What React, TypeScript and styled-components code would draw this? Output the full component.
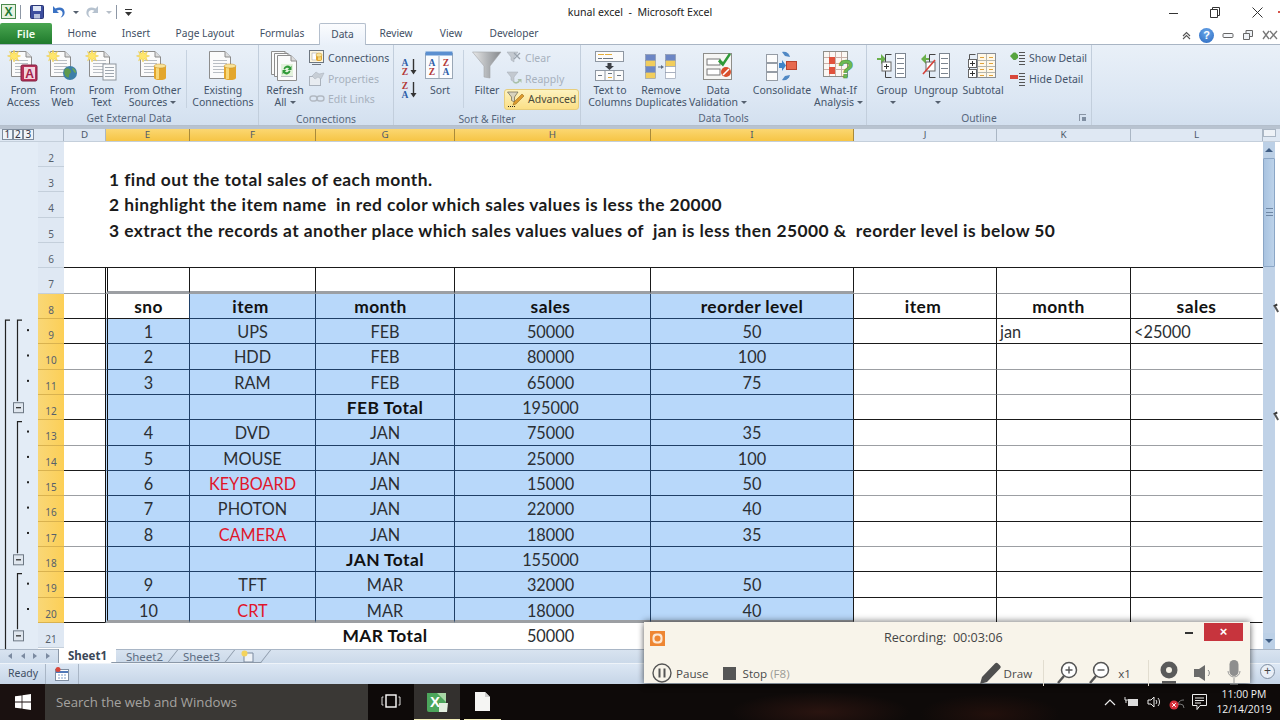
import React from "react";
import styled, { createGlobalStyle } from "styled-components";

const GlobalStyle = createGlobalStyle`
  html, body { margin: 0; padding: 0; width: 1280px; height: 720px; overflow: hidden; background: #fff; }
  * { box-sizing: border-box; }
`;

const uiFont = `"Noto Sans", "Open Sans", "Liberation Sans", sans-serif`;
const cellFont = `Lato, "Open Sans", "Liberation Sans", sans-serif`;
const COLS = "26px 42px 84px 126px 139px 196px 203px 143px 134px 132px";

/* ---------- small drawing helpers ---------- */
const Sheet = ({ x = 0, y = 0, w = 20, h = 26 }: { x?: number; y?: number; w?: number; h?: number }) => (
  <g>
    <path d={`M${x + 0.5} ${y + 0.5}H${x + w - 6}L${x + w - 0.5} ${y + 6}V${y + h - 0.5}H${x + 0.5}Z`} fill="#fbfbfb" stroke="#8d8d8d" />
    <path d={`M${x + w - 6} ${y + 0.5}V${y + 6}H${x + w - 0.5}`} fill="#dcdcdc" stroke="#8d8d8d" />
    {[9, 12, 15, 18, 21].map((d) => (
      <path key={d} d={`M${x + 4} ${y + d + 0.5}H${x + w - 4}`} stroke="#b9bec4" />
    ))}
  </g>
);
const Burst = () => (
  <g>
    <path d="M6 0l1.3 3.6L10.5 1.5 9 5l3.5.9L9 7.3l1.5 3.4-3.2-2L6 12 4.8 8.7l-3.2 2L3 7.3-.5 5.9 3 5 1.5 1.5l3.2 2.1z" fill="#ffe66b" stroke="#e8c43a" strokeWidth=".5" />
  </g>
);
const Barrel = ({ x, y, w = 12, h = 15 }: { x: number; y: number; w?: number; h?: number }) => (
  <g>
    <path d={`M${x} ${y + 2}V${y + h - 2}a${w / 2} 2 0 0 0 ${w} 0V${y + 2}Z`} fill="#e3a62d" />
    <path d={`M${x + 2} ${y + 3}V${y + h - 1}h3V${y + 3}Z`} fill="#f7d777" />
    <ellipse cx={x + w / 2} cy={y + 2} rx={w / 2} ry="2" fill="#f8e39a" stroke="#c48d1f" strokeWidth=".5" />
  </g>
);

const Svg = styled.svg`
  display: block;
  flex: none;
  overflow: visible;
`;

const Icon = ({ w = 32, h = 32, children }: { w?: number; h?: number; children: React.ReactNode }) => (
  <Svg width={w} height={h} viewBox={`0 0 ${w} ${h}`}>
    {children}
  </Svg>
);

const FromAccessIcon = () => (
  <Icon>
    <Sheet x={3} y={1} w={21} h={26} />
    <Burst />
    <rect x="13" y="15" width="16" height="16" rx="1.5" fill="#b8325a" stroke="#7e1f3e" />
    <rect x="16" y="17" width="11" height="12" fill="#f3d4de" />
    <text x="21.5" y="27.5" fontFamily="Liberation Sans" fontWeight="700" fontSize="12" textAnchor="middle" fill="#a51d4a">A</text>
  </Icon>
);
const FromWebIcon = () => (
  <Icon>
    <Sheet x={3} y={1} w={21} h={26} />
    <Burst />
    <circle cx="23" cy="23" r="7" fill="#3d7fa8" />
    <path d="M18 19c3-2 5 0 6 2s-2 2-2 5-3 1-4-1-1-4 0-6z" fill="#5f9a4d" />
    <path d="M25 18c2 0 4 2 4 5-2 0-3-3-4-5z" fill="#6da856" />
  </Icon>
);
const FromTextIcon = () => (
  <Icon>
    <Sheet x={3} y={1} w={21} h={26} />
    <Burst />
    <rect x="17" y="14" width="13" height="16" fill="#fafbfc" stroke="#8d959d" />
    {[17, 20, 23, 26].map((d) => (
      <path key={d} d={`M19 ${d + 0.5}H28`} stroke="#9fa7af" />
    ))}
  </Icon>
);
const FromOtherIcon = () => (
  <Icon>
    <Sheet x={3} y={1} w={21} h={26} />
    <Burst />
    <Barrel x={17} y={14} w={12} h={16} />
  </Icon>
);
const ExistingIcon = () => (
  <Icon>
    <Sheet x={2} y={1} w={22} h={28} />
    <Barrel x={17} y={14} w={12} h={16} />
  </Icon>
);
const RefreshIcon = () => (
  <Icon>
    <Sheet x={2} y={1} w={20} h={24} />
    <Sheet x={5} y={3} w={20} h={24} />
    <Sheet x={8} y={5} w={20} h={26} />
    <rect x="12" y="14" width="12" height="12" fill="#e3f2dc" />
    <path d="M14.5 19a4 4 0 0 1 7-2l1-1.5V20h-4l1.5-1.5a2.4 2.4 0 0 0-4 1z" fill="#2f9a38" />
    <path d="M21.5 21a4 4 0 0 1-7 2l-1 1.5V20h4L16 21.5a2.4 2.4 0 0 0 4-1z" fill="#2f9a38" />
  </Icon>
);
const SortAscIcon = ({ flip }: { flip?: boolean }) => (
  <Icon w={18} h={20}>
    <text x="5" y="9" fontFamily="Liberation Serif" fontWeight="700" fontSize="9.5" textAnchor="middle" fill={flip ? "#b23838" : "#2d5ea8"}>{flip ? "Z" : "A"}</text>
    <text x="5" y="18" fontFamily="Liberation Serif" fontWeight="700" fontSize="9.5" textAnchor="middle" fill={flip ? "#2d5ea8" : "#b23838"}>{flip ? "A" : "Z"}</text>
    <path d="M13.5 2v13" stroke="#333" strokeWidth="1.4" />
    <path d="M10.5 13h6l-3 4.5z" fill="#333" />
  </Icon>
);
const SortIcon = () => (
  <Icon w={30} h={30}>
    <rect x=".5" y="2.5" width="27" height="25" fill="#fbfcfe" stroke="#9aa7b6" />
    <rect x=".5" y=".5" width="27" height="4" fill="#5b8fd0" />
    <path d="M14 5v22" stroke="#9aa7b6" />
    <text x="7" y="15" fontFamily="Liberation Serif" fontWeight="700" fontSize="9.5" textAnchor="middle" fill="#2d5ea8">A</text>
    <text x="7" y="24" fontFamily="Liberation Serif" fontWeight="700" fontSize="9.5" textAnchor="middle" fill="#b23838">Z</text>
    <text x="21" y="15" fontFamily="Liberation Serif" fontWeight="700" fontSize="9.5" textAnchor="middle" fill="#b23838">Z</text>
    <text x="21" y="24" fontFamily="Liberation Serif" fontWeight="700" fontSize="9.5" textAnchor="middle" fill="#2d5ea8">A</text>
  </Icon>
);
const FilterIcon = () => (
  <Icon w={30} h={30}>
    <defs>
      <linearGradient id="fn" x1="0" x2="1" y1="0" y2="0">
        <stop offset="0" stopColor="#e8e8e8" />
        <stop offset=".5" stopColor="#b4b7ba" />
        <stop offset="1" stopColor="#85888c" />
      </linearGradient>
    </defs>
    <path d="M.5 1H29L18 15V27l-6-1V15z" fill="url(#fn)" stroke="#a2a5a8" strokeWidth=".6" />
  </Icon>
);
const TextColumnsIcon = () => (
  <Icon w={30} h={30}>
    <rect x=".5" y=".5" width="28" height="10" fill="#fbfbfb" stroke="#8e97a2" />
    <path d="M3 3.5h6M10 3.5h7" stroke="#e3ad3b" /><path d="M3 7.5h4M8 7.5h10" stroke="#6b7683" />
    <path d="M12.5 12h4v3h2.5l-4.5 4-4.5-4h2.5z" fill="#3b3f45" />
    <rect x=".5" y="19.5" width="28" height="10" fill="#fbfbfb" stroke="#8e97a2" />
    <path d="M10 19.5v10M19 19.5v10" stroke="#8e97a2" />
    <path d="M3 24.5h4M13 22.5h4M22 24.5h4" stroke="#6b7683" /><path d="M13 26.5h4" stroke="#e3ad3b" />
  </Icon>
);
const RemoveDupIcon = () => (
  <Icon w={32} h={30}>
    {[0, 1, 2, 3].map((i) => (
      <rect key={i} x=".5" y={3.5 + i * 6} width="10" height="6" fill={i % 2 ? "#f1cd5c" : "#6c86c4"} stroke="#8b95a8" strokeWidth=".6" />
    ))}
    <path d="M13 16h4" stroke="#5b6a80" /><path d="M16 14l3 2-3 2z" fill="#5b6a80" />
    {[0, 1, 2, 3].map((i) => (
      <rect key={i} x="20.5" y={3.5 + i * 6} width="10" height="6" fill={i === 0 ? "#6c86c4" : i === 1 ? "#f1cd5c" : "#fff"} stroke="#8b95a8" strokeWidth=".6" />
    ))}
  </Icon>
);
const ValidationIcon = () => (
  <Icon w={30} h={30}>
    <rect x=".5" y="2.5" width="28" height="26" fill="#f6f6f4" stroke="#8e8e8a" />
    <rect x="4" y="8" width="13" height="6" fill="#fff" stroke="#777" />
    <rect x="4" y="18" width="13" height="6" fill="#fff" stroke="#777" />
    <path d="M17 8l3 3 6-9 2 1.5-8 12-5-5z" fill="#2f9a38" />
    <circle cx="23" cy="21" r="5" fill="#d94f2b" />
    <path d="M20 24l6-6" stroke="#fff" strokeWidth="1.6" />
  </Icon>
);
const ConsolidateIcon = () => (
  <Icon w={32} h={30}>
    {[3, 12, 21].map((y) => (
      <rect key={y} x=".5" y={y + 0.5} width="11" height="8" fill="#fcfcfc" stroke="#959ca5" />
    ))}
    <path d="M13 12h3v-3l4 5.5-4 5.5v-3h-3z" fill="#3f84c9" />
    <rect x="20.5" y="10.5" width="10" height="8" fill="#e76a4f" stroke="#b9442f" />
    <path d="M16 1c4-1 7 1 8 5l-5-1z" fill="#5088c4" />
    <path d="M16 29c4 1 7-1 8-5l-5 1z" fill="#5088c4" />
  </Icon>
);
const WhatIfIcon = () => (
  <Icon w={32} h={30}>
    <rect x=".5" y=".5" width="24" height="25" fill="#fbf7f3" stroke="#8e8e8a" />
    {[6, 12, 18].map((p) => (
      <path key={p} d={`M${p + 0.5} 1V25M1 ${p + 0.5}H24`} stroke="#c9b0a8" />
    ))}
    <rect x="6" y="6" width="6" height="7" fill="#e1523c" /><rect x="6" y="16" width="6" height="7" fill="#e1523c" />
    <text x="23" y="27" fontFamily="Liberation Sans" fontWeight="700" fontSize="26" textAnchor="middle" fill="#6dbb52" stroke="#3f8a37" strokeWidth=".5">?</text>
  </Icon>
);
const Arrow = ({ color, dir }: { color: string; dir: number }) => (
  <path d={dir > 0 ? "M0 4h4V0l5 5-5 5V6H0z" : "M9 4H5V0L0 5l5 5V6h4z"} fill={color} />
);
const Brackets = ({ x = 7 }: { x?: number }) => (
  <g transform={`translate(${x} 0)`}>
    <path d="M7.5 2.5H1.5V25.5H7.5" fill="none" stroke="#444" />
    <rect x="11.5" y="1.5" width="10" height="24" fill="#fff" stroke="#7c8590" />
    {[6, 11, 16, 21].map((d) => (
      <path key={d} d={`M13 ${d + 0.5}H20`} stroke="#7c8590" />
    ))}
  </g>
);
const GroupIcon = () => (
  <Icon w={30} h={28}>
    <g transform="translate(0 2)"><Arrow color="#6bb04c" dir={1} /></g>
    <Brackets />
    <rect x="5" y="10" width="9" height="9" fill="#fff" stroke="#666" />
    <path d="M9.5 12v5M7 14.5h5" stroke="#333" />
  </Icon>
);
const UngroupIcon = () => (
  <Icon w={30} h={28}>
    <g transform="translate(0 2)"><Arrow color="#6bb04c" dir={-1} /></g>
    <Brackets />
    <rect x="5" y="10" width="9" height="9" fill="#fff" stroke="#666" />
    <path d="M2 22L14 8" stroke="#d6423a" strokeWidth="1.6" />
  </Icon>
);
const SubtotalIcon = () => (
  <Icon w={30} h={28}>
    <path d="M7.5 2.5H1.5V25.5H7.5" fill="none" stroke="#555" />
    <rect x="9.5" y="1.5" width="18" height="24" fill="#fff8e8" stroke="#8a8f96" />
    <path d="M18.5 2v23M10 8.5h17M10 14.5h17M10 20.5h17" stroke="#b6b6ae" />
    <path d="M12 5.5h4M21 5.5h4M12 11.5h4M21 11.5h4M12 17.5h4M21 17.5h4M12 23.5h4M21 23.5h4" stroke="#e0a33b" />
    <rect x=".5" y="7.5" width="8" height="8" fill="#fff" stroke="#666" /><path d="M4.5 9v5M2 11.5h5" stroke="#333" />
    <rect x=".5" y="17.5" width="8" height="8" fill="#fff" stroke="#666" /><path d="M4.5 19v5M2 21.5h5" stroke="#333" />
  </Icon>
);
const ConnIcon = () => (
  <Icon w={16} h={16}>
    <rect x=".5" y=".5" width="14" height="12" fill="#fdf6e0" stroke="#6d7680" />
    <rect x="3" y="3" width="5" height="7" fill="#fff" stroke="#999" strokeWidth=".5" />
    <Barrel x={7} y={3} w={6} h={8} />
    <path d="M3 14.5h9" stroke="#6d7680" />
  </Icon>
);
const PropsIcon = () => (
  <Icon w={16} h={16}>
    <rect x=".5" y="5.5" width="11" height="9" fill="#e8ecf1" stroke="#aab2bc" />
    <path d="M3 5l4-4 3 2 5-1-3 6-3-2-3 2z" fill="#c7ced6" stroke="#a7afb8" strokeWidth=".5" />
  </Icon>
);
const LinksIcon = () => (
  <Icon w={16} h={16}>
    <rect x="1" y="5" width="7" height="5" rx="2.5" fill="none" stroke="#b2b9c2" strokeWidth="1.4" />
    <rect x="8" y="5" width="7" height="5" rx="2.5" fill="none" stroke="#b2b9c2" strokeWidth="1.4" />
  </Icon>
);
const ClearIcon = () => (
  <Icon w={16} h={16}>
    <path d="M1 2h11L8 7v5L5 10V7z" fill="#c3c9d0" stroke="#a5adb6" strokeWidth=".5" />
    <path d="M8 9l6-6M8 3l6 6" stroke="#9aa3ad" strokeWidth="1.3" />
  </Icon>
);
const ReapplyIcon = () => (
  <Icon w={16} h={16}>
    <path d="M1 1h11L8 6v5L5 9V6z" fill="#c3c9d0" stroke="#a5adb6" strokeWidth=".5" />
    <path d="M7 11a4 4 0 0 0 7-1l1.5 2V8h-4l1 1.2a3 3 0 0 1-5 .8z" fill="#a9c0a9" />
  </Icon>
);
const AdvancedIcon = () => (
  <Icon w={18} h={17}>
    <path d="M.5 1H11L7.5 6V11L4.5 9.5V6z" fill="#d8d3bd" stroke="#6a6653" strokeWidth=".7" />
    <path d="M7 11L15 3l2 2-8 8-3 1z" fill="#dd9a2d" stroke="#8a6012" strokeWidth=".5" />
    <path d="M1 15.5h7" stroke="#222" strokeDasharray="1 1" />
  </Icon>
);
const DetailIcon = ({ show }: { show?: boolean }) => (
  <Icon w={16} h={14}>
    {show ? (
      <path d="M0 5l3.5-3.5h2L8 4v3L5.5 9h-2z" fill="#58a540" />
    ) : (
      <rect x="0" y="3" width="8" height="4" fill="#d8473b" />
    )}
    {[1, 4, 7, 10, 13].map((y) => (
      <path key={y} d={`M9 ${y + 0.5}H15`} stroke="#555" />
    ))}
  </Icon>
);

/* ---------- title bar ---------- */
const TitleBar = styled.div`
  height: 24px;
  display: flex;
  align-items: center;
  background: #fff;
  position: relative;
`;
const Qat = styled.div`
  display: flex;
  align-items: center;
  padding-left: 1px;
`;
const QatSep = styled.span<{ $gap: number }>`
  width: 1px;
  height: 14px;
  background: #8d97a5;
  margin: 0 ${(p) => p.$gap}px;
`;
const QatGap = styled.span<{ $w: number }>`
  width: ${(p) => p.$w}px;
  flex: none;
`;
const TitleText = styled.div`
  position: absolute;
  left: 0;
  right: 0;
  top: 5px;
  text-align: center;
  font: 10.6px ${uiFont};
  color: #222;
  white-space: pre;
`;
const WinControls = styled.div`
  margin-left: auto;
  display: flex;
  align-items: center;
`;
const WinBtn = styled.div`
  width: 42px;
  height: 24px;
  display: flex;
  align-items: center;
  justify-content: center;
`;
const RedNick = styled.span`
  width: 2px;
  height: 2px;
  background: #d6554b;
`;

/* ---------- tab strip ---------- */
const TabStrip = styled.div`
  height: 21px;
  display: flex;
  align-items: flex-end;
  background: #fff;
  position: relative;
  border-bottom: 1px solid #a9b5c4;
`;
const FileTab = styled.div`
  width: 52px;
  height: 21px;
  background: linear-gradient(#4aa651, #1f7a2c);
  border-radius: 2px 2px 0 0;
  color: #f2fff2;
  font: 600 11px/21px ${uiFont};
  text-align: center;
`;
const Tab = styled.div<{ $w: number; $active?: boolean }>`
  width: ${(p) => p.$w}px;
  height: ${(p) => (p.$active ? "22px" : "21px")};
  font: 10.2px/21px ${uiFont};
  color: #3f4f64;
  text-align: center;
  ${(p) =>
    p.$active
      ? `background: linear-gradient(#fbfcfe, #e9f0f9); border: 1px solid #b4bfcd; border-bottom: none; border-radius: 2px 2px 0 0; margin: 0 0 -1px 5px; position: relative; z-index: 1;`
      : ""}
`;
const HelpRow = styled.div`
  position: absolute;
  right: 0;
  top: 1px;
  height: 20px;
  display: flex;
  align-items: center;
  gap: 8px;
  padding-right: 2px;
`;
const HelpDot = styled.span`
  width: 15px;
  height: 15px;
  border-radius: 50%;
  background: radial-gradient(circle at 50% 30%, #6aa7ea, #2a68bf);
  color: #fff;
  font: 700 11px/15px "Liberation Sans", sans-serif;
  text-align: center;
`;

/* ---------- ribbon ---------- */
const Ribbon = styled.div`
  height: 81px;
  display: flex;
  background: linear-gradient(#e9f0f8, #dbe6f3 70%, #d3e0ef);
  border-bottom: 1px solid #b4bfcc;
`;
const Group = styled.div<{ $w: number }>`
  width: ${(p) => p.$w}px;
  display: flex;
  flex-direction: column;
  border-right: 1px solid #c2cedc;
  position: relative;
`;
const GroupBody = styled.div<{ $pad: number }>`
  flex: 1;
  display: flex;
  padding: 3px 0 0 ${(p) => p.$pad}px;
`;
const GroupLabel = styled.div`
  height: 16px;
  font: 10.3px/18px ${uiFont};
  color: #56667c;
  text-align: center;
`;
const Launcher = styled.span`
  position: absolute;
  right: 5px;
  bottom: 4px;
  width: 7px;
  height: 7px;
  border-left: 1px solid #8995a5;
  border-top: 1px solid #8995a5;
  &::after {
    content: "";
    position: absolute;
    right: 0;
    bottom: 0;
    width: 4px;
    height: 4px;
    background: #7f8ea1;
  }
`;
const Large = styled.div<{ $w: number }>`
  width: ${(p) => p.$w}px;
  display: flex;
  flex-direction: column;
  align-items: center;
  flex: none;
`;
const LargeIcon = styled.div`
  height: 36px;
  display: flex;
  align-items: center;
  justify-content: center;
`;
const LargeText = styled.div`
  font: 10.5px/12px ${uiFont};
  color: #45556b;
  text-align: center;
  white-space: nowrap;
`;
const Caret = styled.i<{ $muted?: boolean }>`
  display: inline-block;
  width: 0;
  height: 0;
  margin-left: 3px;
  vertical-align: 2px;
  border-left: 3px solid transparent;
  border-right: 3px solid transparent;
  border-top: 3px solid ${(p) => (p.$muted ? "#b6bec8" : "#55606f")};
`;
const Divider = styled.span<{ $ml: number; $mr: number }>`
  width: 1px;
  height: 58px;
  background: #c6d2e0;
  margin: 2px ${(p) => p.$mr}px 0 ${(p) => p.$ml}px;
  flex: none;
`;
const SmallCol = styled.div`
  display: flex;
  flex-direction: column;
  flex: none;
`;
const Small = styled.div<{ $off?: boolean; $hot?: boolean }>`
  height: 20.5px;
  display: flex;
  align-items: center;
  gap: 3px;
  padding: 0 2px;
  white-space: nowrap;
  font: 10.5px ${uiFont};
  color: ${(p) => (p.$off ? "#a7b1bd" : "#45556b")};
  ${(p) =>
    p.$hot
      ? `background: linear-gradient(#fdf3c0, #fbdf86); border: 1px solid #e7cd7b; border-radius: 3px; color: #4b4a3a;`
      : ""}
`;
const SortCol = styled.div`
  display: flex;
  flex-direction: column;
  gap: 3px;
  padding-top: 9px;
  width: 25px;
  flex: none;
`;

/* ---------- column headers ---------- */
const HeaderStrip = styled.div`
  height: 3px;
  background: #b8c3d0;
`;
const ColBar = styled.div`
  height: 12.5px;
  display: flex;
  background: #dfe8f3;
  border-bottom: 1px solid #c4cfdb;
`;
const Levels = styled.div`
  width: 38px;
  display: flex;
  padding: 0 0 0 2px;
`;
const Level = styled.span`
  width: 10.5px;
  height: 11px;
  background: #eef3f9;
  border: 1px solid #7f8c9c;
  font: 10px/9px ${uiFont};
  text-align: center;
  color: #334;
`;
const ColRow = styled.div`
  display: grid;
  grid-template-columns: ${COLS};
`;
const ColHead = styled.div<{ $on?: boolean }>`
  height: 11.5px;
  font: 9.8px/11px ${uiFont};
  text-align: center;
  color: #4d5a6a;
  background: ${(p) => (p.$on ? "linear-gradient(#fbd771, #f6c545)" : "#dfe8f3")};
  border-right: 1px solid ${(p) => (p.$on ? "#a98a3a" : "#aab6c4")};
`;
const SplitCap = styled.div`
  width: 13px;
  height: 8px;
  background: #eef2f7;
  border: 1px solid #aab6c4;
`;

/* ---------- sheet ---------- */
const Work = styled.div`
  height: 507px;
  display: flex;
  overflow: hidden;
`;
const OutlinePane = styled.div`
  width: 38px;
  flex: none;
  background: #e3ecf6;
`;
const Grid = styled.div`
  width: 1225px;
  flex: none;
  background: #fff;
`;
const Row = styled.div`
  height: 25.35px;
  display: grid;
  grid-template-columns: ${COLS};
  grid-template-rows: 25.35px;
`;
const RowNum = styled.div<{ $on?: boolean }>`
  font: 10px/12px ${uiFont};
  color: #56606c;
  text-align: center;
  padding-top: 10px;
  background: ${(p) => (p.$on ? "linear-gradient(90deg, #f9d777, #fccf56)" : "#dfe8f3")};
  border-bottom: 1px solid ${(p) => (p.$on ? "#d9b24f" : "#c4cfdb")};
`;
const Cell = styled.div<{
  $blue?: boolean;
  $line?: string;
  $vline?: string;
  $edge?: boolean;
  $thick?: boolean;
  $left?: boolean;
  $bold?: boolean;
  $red?: boolean;
  $nudge?: number;
}>`
  min-height: 0;
  font: ${(p) => (p.$bold ? "700 17.4px/24px" : "400 16.3px/24px")} ${cellFont};
  letter-spacing: ${(p) => (p.$bold ? "0.42px" : "0")};
  color: ${(p) => (p.$red ? "#e0162b" : p.$bold ? "#111" : "#2b2f33")};
  text-align: ${(p) => (p.$left ? "left" : "center")};
  padding: 1px ${(p) => p.$nudge ?? 0}px 0 ${(p) => (p.$left ? "3px" : "0")};
  background: ${(p) => (p.$blue ? "#b8d8fa" : "#fff")};
  white-space: nowrap;
  border-bottom: ${(p) => (p.$thick ? "3px solid #9c9fa3" : `1px solid ${p.$line ?? "transparent"}`)};
  border-right: 1px solid ${(p) => p.$vline ?? "transparent"};
  ${(p) => (p.$edge ? "border-left: 3px double #111; margin-left: -1px;" : "")}
`;
const RuleCell = styled.div`
  grid-column: 2 / -1;
  border-bottom: 1px solid #1a1a1a;
`;
const NoteText = styled.div`
  grid-column: 3 / -1;
  padding: 1px 0 0 3px;
  font: 700 17.4px/24px ${cellFont};
  letter-spacing: 0.42px;
  color: #1b1b1b;
  white-space: pre;
`;
const VScroll = styled.div`
  width: 12px;
  flex: none;
  display: flex;
  flex-direction: column;
  background: #c0d2e7;
`;
const ScrollBtn = styled.div<{ $down?: boolean }>`
  height: 16px;
  flex: none;
  background: #bcd0e6;
  display: flex;
  align-items: center;
  justify-content: center;
  &::after {
    content: "";
    border-left: 4px solid transparent;
    border-right: 4px solid transparent;
    ${(p) => (p.$down ? "border-top: 4px solid #3f5d83;" : "border-bottom: 4px solid #3f5d83;")}
  }
`;
const Thumb = styled.div`
  height: 109px;
  flex: none;
  background: linear-gradient(90deg, #a9c3e0, #bdd3ea);
  border: 1px solid #8ba6c6;
  border-radius: 1px;
  display: flex;
  align-items: center;
  justify-content: center;
  &::after {
    content: "";
    width: 7px;
    height: 6px;
    border-top: 1px solid #6f87a5;
    border-bottom: 1px solid #6f87a5;
    background: linear-gradient(#6f87a5, #6f87a5) center / 100% 1px no-repeat;
  }
`;
const Track = styled.div`
  flex: 1;
`;
const EdgeStrip = styled.div`
  flex: 1;
  background: #fff;
  position: relative;
`;
const EdgeMark = styled.span<{ $top: number }>`
  position: absolute;
  left: 0;
  top: ${(p) => p.$top}px;
  width: 4px;
  height: 8px;
  border-top: 2px solid #333;
  border-left: 2px solid #555;
  transform: rotate(-30deg);
`;

/* ---------- sheet tabs + status ---------- */
const SheetBar = styled.div`
  height: 14px;
  display: flex;
  align-items: stretch;
  background: linear-gradient(#d8e3f0, #cbd9e9);
  border-top: 1px solid #a9b6c6;
`;
const NavArrows = styled.div`
  width: 58px;
  display: flex;
  align-items: center;
  justify-content: space-around;
  padding: 0 4px;
  flex: none;
`;
const Nav = styled.span`
  width: 0;
  height: 0;
  border-top: 3px solid transparent;
  border-bottom: 3px solid transparent;
  border-right: 4px solid #7b8aa0;
`;
const NavFwd = styled(Nav)`
  border-right: none;
  border-left: 4px solid #7b8aa0;
`;
const ActiveTab = styled.div`
  width: 58px;
  background: #fff;
  border-left: 1px solid #8b98a8;
  font: 700 11.5px/13px ${uiFont};
  color: #3a4657;
  text-align: center;
  flex: none;
  margin-top: -1px;
`;
const IdleTab = styled.div<{ $w: number }>`
  position: relative;
  width: ${(p) => p.$w}px;
  flex: none;
  font: 11.5px/13px ${uiFont};
  color: #5d6d82;
  display: flex;
  justify-content: center;
  &::before {
    content: "";
    position: absolute;
    inset: 0;
    transform: skewX(-38deg);
    border-right: 1px solid #8b98a8;
    border-bottom: 1px solid #8b98a8;
  }
`;
const StatusBar = styled.div`
  height: 21px;
  display: flex;
  align-items: center;
  background: linear-gradient(#dce7f4, #c6d5e7);
  border-top: 1px solid #eef3f9;
`;
const Ready = styled.div`
  width: 45px;
  padding: 0 0 2px 8px;
  font: 10.5px ${uiFont};
  color: #3f4f64;
  flex: none;
`;
const StatusSep = styled.span`
  width: 1px;
  height: 20px;
  background: #a9b6c6;
  flex: none;
`;
const MacroWrap = styled.div`
  width: 32px;
  display: flex;
  justify-content: center;
  flex: none;
`;
const PlusBtn = styled.div`
  position: absolute;
  left: 1260px;
  top: 664px;
  width: 15px;
  height: 15px;
  border: 1px solid #7f8ea1;
  border-radius: 50%;
  background: #e9eff7;
  font: 12px/12px "Liberation Sans", sans-serif;
  text-align: center;
  color: #444;
`;

/* ---------- taskbar ---------- */
const Taskbar = styled.div`
  height: 37px;
  display: flex;
  align-items: stretch;
  background:
    radial-gradient(60px 24px at 200px 30px, #2a1512, transparent),
    radial-gradient(90px 20px at 820px 28px, #2a1410, transparent),
    radial-gradient(70px 20px at 990px 30px, #22100c, transparent),
    #0e0a09;
`;
const StartBtn = styled.div`
  width: 45px;
  flex: none;
  display: flex;
  align-items: center;
  justify-content: center;
  background: #1a1110;
`;
const SearchBox = styled.div`
  width: 323px;
  flex: none;
  background: #3a3835;
  padding-left: 11px;
  font: 13.2px/37px "Open Sans", ${uiFont};
  color: #a5a3a0;
`;
const TaskBtn = styled.div<{ $w: number; $on?: boolean; $mark?: boolean }>`
  width: ${(p) => p.$w}px;
  flex: none;
  display: flex;
  align-items: center;
  justify-content: center;
  background: ${(p) => (p.$on ? "#33302e" : "transparent")};
  border-bottom: 2px solid ${(p) => (p.$mark ? "#f3eeb8" : "transparent")};
`;
const TaskGap = styled.span`
  width: 4px;
  flex: none;
`;
const Tray = styled.div`
  margin-left: auto;
  display: flex;
  align-items: center;
  gap: 8px;
  padding-right: 5px;
`;
const Clock = styled.div`
  font: 10.4px/15px "Open Sans", ${uiFont};
  color: #f2f2f2;
  text-align: center;
  margin-left: -2px;
  width: 62px;
`;

/* ---------- recorder ---------- */
const Recorder = styled.div`
  position: absolute;
  left: 644px;
  top: 622px;
  width: 606px;
  height: 61px;
  background: #f8f4ea;
  box-shadow: 0 -2px 6px rgba(0, 0, 0, 0.35), 0 3px 6px rgba(0, 0, 0, 0.4);
  display: flex;
  flex-direction: column;
`;
const RecTop = styled.div`
  height: 32px;
  flex: none;
  display: flex;
  align-items: center;
  position: relative;
  padding-left: 6px;
`;
const RecTitle = styled.div`
  position: absolute;
  left: 240px;
  top: 7px;
  font: 12.6px "Open Sans", ${uiFont};
  color: #454545;
  white-space: pre;
`;
const RecClose = styled.div`
  position: absolute;
  right: 7px;
  top: 1px;
  width: 39px;
  height: 18px;
  background: #c7343d;
  color: #fff;
  font: 700 13px/18px "Liberation Sans", sans-serif;
  text-align: center;
`;
const RecMin = styled.div`
  position: absolute;
  right: 57px;
  top: 10px;
  width: 8px;
  height: 2px;
  background: #333;
`;
const RecBottom = styled.div`
  flex: 1;
  display: flex;
  align-items: center;
  padding: 6px 0 0 8px;
`;
const RecLabel = styled.span<{ $ml: number }>`
  margin-left: ${(p) => p.$ml}px;
  font: 11.6px "Open Sans", ${uiFont};
  color: #4a4a4a;
  white-space: pre;
`;
const Muted = styled.span`
  color: #9b9b96;
`;
const StopSquare = styled.span`
  width: 13px;
  height: 13px;
  background: #565656;
  margin-left: 14px;
  flex: none;
`;
const RecSep = styled.span<{ $ml: number }>`
  width: 1px;
  height: 26px;
  background: #e2ddd0;
  margin-left: ${(p) => p.$ml}px;
  flex: none;
`;
const RecIcon = styled.span<{ $ml: number }>`
  margin-left: ${(p) => p.$ml}px;
  display: block;
  flex: none;
`;

const Root = styled.div`
  width: 1280px;
  height: 720px;
  position: relative;
  overflow: hidden;
`;

/* ---------- data ---------- */
type DataRow = { n: number; e?: string; f?: string; g?: string; h?: string; i?: string; red?: boolean; total?: boolean };
const DATA: DataRow[] = [
  { n: 9, e: "1", f: "UPS", g: "FEB", h: "50000", i: "50" },
  { n: 10, e: "2", f: "HDD", g: "FEB", h: "80000", i: "100" },
  { n: 11, e: "3", f: "RAM", g: "FEB", h: "65000", i: "75" },
  { n: 12, g: "FEB Total", h: "195000", total: true },
  { n: 13, e: "4", f: "DVD", g: "JAN", h: "75000", i: "35" },
  { n: 14, e: "5", f: "MOUSE", g: "JAN", h: "25000", i: "100" },
  { n: 15, e: "6", f: "KEYBOARD", g: "JAN", h: "15000", i: "50", red: true },
  { n: 16, e: "7", f: "PHOTON", g: "JAN", h: "22000", i: "40" },
  { n: 17, e: "8", f: "CAMERA", g: "JAN", h: "18000", i: "35", red: true },
  { n: 18, g: "JAN Total", h: "155000", total: true },
  { n: 19, e: "9", f: "TFT", g: "MAR", h: "32000", i: "50" },
  { n: 20, e: "10", f: "CRT", g: "MAR", h: "18000", i: "40", red: true },
];
const NOTES: Record<number, string> = {
  3: "1 find out the total sales of each month.",
  4: "2 hinghlight the item name  in red color which sales values is less the 20000",
  5: "3 extract the records at another place which sales values values of  jan is less then 25000 &  reorder level is below 50",
};
const NAVY = "#1f3f66";
const INK = "#1a1a1a";
const GREY = "#9c9fa3";
// the video makes every other rule look lighter, rows 9 to 20
const RIGHT_LINES = [INK, GREY, GREY, INK, GREY, INK, GREY, INK, GREY, INK, INK, INK];

/* ---------- outline drawing ---------- */
const OutlineDrawing = () => {
  const y = (row: number) => (row - 2) * 25.35 + 12.7;
  const box = (row: number) => (
    <g key={row}>
      <rect x="13.5" y={y(row) - 5.5} width="10" height="10" fill="#dfe6ee" stroke="#6d7884" />
      <path d={`M16 ${y(row) - 0.5}h5`} stroke="#222" strokeWidth="1.2" />
    </g>
  );
  const inner = (a: number, b: number) => (
    <path key={a} d={`M22 ${y(a) - 12}H17.5V${y(b) - 7}`} fill="none" stroke="#222" strokeWidth="1.2" />
  );
  return (
    <Svg width={38} height={507} viewBox="0 0 38 507">
      <path d={`M10 ${y(9) - 12}H5.5V${507}`} fill="none" stroke="#222" strokeWidth="1.2" />
      {inner(9, 12)}
      {inner(13, 18)}
      {inner(19, 21)}
      {[12, 18, 21].map(box)}
      {DATA.filter((d) => !d.total).map((d) => (
        <rect key={d.n} x="27" y={y(d.n) - 3} width="2" height="2" fill="#222" />
      ))}
    </Svg>
  );
};

const COL_LETTERS = ["D", "E", "F", "G", "H", "I", "J", "K", "L"];

const LargeBtn = ({ w, icon, children }: { w: number; icon: React.ReactNode; children: React.ReactNode }) => (
  <Large $w={w}>
    <LargeIcon>{icon}</LargeIcon>
    <LargeText>{children}</LargeText>
  </Large>
);

const SheetRows = () => {
  const rows: React.ReactNode[] = [];
  for (let n = 2; n <= 6; n++) {
    rows.push(
      <Row key={n}>
        <RowNum>{n}</RowNum>
        {n === 6 ? (
          <RuleCell />
        ) : (
          <>
            <Cell />
            {NOTES[n] ? <NoteText>{NOTES[n]}</NoteText> : null}
          </>
        )}
      </Row>
    );
  }
  rows.push(
    <Row key={7}>
      <RowNum>7</RowNum>
      <Cell $line={GREY} />
      <Cell $edge $thick $vline={INK} />
      <Cell $thick $vline={INK} />
      <Cell $thick $vline={INK} />
      <Cell $thick $vline={INK} />
      <Cell $thick $vline={INK} />
      <Cell $line={GREY} $vline={INK} />
      <Cell $line={GREY} $vline={INK} />
      <Cell $line={GREY} />
    </Row>
  );
  rows.push(
    <Row key={8}>
      <RowNum $on>8</RowNum>
      <Cell $line={INK} />
      <Cell $edge $bold $line={INK} $vline={NAVY}>sno</Cell>
      <Cell $blue $bold $line={NAVY} $vline={NAVY} $nudge={4}>item</Cell>
      <Cell $blue $bold $line={NAVY} $vline={NAVY} $nudge={9}>month</Cell>
      <Cell $blue $bold $line={NAVY} $vline={NAVY} $nudge={4}>sales</Cell>
      <Cell $blue $bold $line={NAVY} $vline={INK}>reorder level</Cell>
      <Cell $bold $line={INK} $vline={INK} $nudge={4}>item</Cell>
      <Cell $bold $line={INK} $vline={INK} $nudge={10}>month</Cell>
      <Cell $bold $line={INK}>sales</Cell>
    </Row>
  );
  DATA.forEach((d, idx) => {
    const line = RIGHT_LINES[idx];
    const last = d.n === 20;
    rows.push(
      <Row key={d.n}>
        <RowNum $on>{d.n}</RowNum>
        <Cell $line={line} />
        <Cell $edge $blue $line={NAVY} $vline={NAVY} $thick={last}>{d.e}</Cell>
        <Cell $blue $red={d.red} $line={NAVY} $vline={NAVY} $thick={last}>{d.f}</Cell>
        <Cell $blue $bold={d.total} $line={NAVY} $vline={NAVY} $thick={last}>{d.g}</Cell>
        <Cell $blue $line={NAVY} $vline={NAVY} $nudge={4} $thick={last}>{d.h}</Cell>
        <Cell $blue $line={NAVY} $vline={INK} $thick={last}>{d.i}</Cell>
        <Cell $line={line} $vline={INK} />
        <Cell $left $line={line} $vline={INK}>{d.n === 9 ? "jan" : ""}</Cell>
        <Cell $left $line={line}>{d.n === 9 ? "<25000" : ""}</Cell>
      </Row>
    );
  });
  rows.push(
    <Row key={21}>
      <RowNum>21</RowNum>
      <Cell />
      <Cell />
      <Cell />
      <Cell $bold>MAR Total</Cell>
      <Cell $nudge={4}>50000</Cell>
    </Row>
  );
  return <>{rows}</>;
};

export default function App() {
  return (
    <Root>
      <GlobalStyle />
      <TitleBar>
        <Qat>
          <Icon w={16} h={16}>
            <rect x=".5" y=".5" width="14" height="14" fill="#e7f2df" stroke="#4b8a4e" />
            <text x="7.5" y="12" fontFamily="Liberation Sans" fontWeight="700" fontSize="12" textAnchor="middle" fill="#1f7a33">X</text>
          </Icon>
          <QatSep $gap={3} />
          <QatGap $w={6} />
          <Icon w={14} h={14}>
            <rect x=".5" y=".5" width="13" height="13" rx="1" fill="#3d4f9f" stroke="#2a3677" />
            <rect x="3" y="1" width="8" height="5" fill="#dfe6f5" />
            <rect x="4" y="9" width="6" height="4.5" fill="#b9c3de" />
          </Icon>
          <QatGap $w={8} />
          <Icon w={13} h={14}>
            <path d="M1 1v7h6L4.6 5.8C7 4 10 5 10.5 7.5c.4 2-.6 3.8-2 5 3-.6 4.5-3.4 4-6C12 3 8 1.2 3.4 3.6z" fill="#3a72c4" />
          </Icon>
          <QatGap $w={5} />
          <Caret />
          <QatGap $w={7} />
          <Icon w={13} h={14}>
            <path d="M12 1v7H6l2.4-2.2C6 4 3 5 2.5 7.5c-.4 2 .6 3.8 2 5-3-.6-4.5-3.4-4-6C1 3 5 1.2 9.6 3.6z" fill="#b6c2cf" />
          </Icon>
          <QatGap $w={4} />
          <Caret $muted />
          <QatSep $gap={4} />
          <QatGap $w={3} />
          <Icon w={9} h={9}>
            <path d="M1 1.5h7" stroke="#333" />
            <path d="M1 4h7L4.5 8z" fill="#333" />
          </Icon>
        </Qat>
        <TitleText>{"kunal excel  -  Microsoft Excel"}</TitleText>
        <WinControls>
          <WinBtn>
            <Icon w={11} h={11}><path d="M1 6.5h9" stroke="#333" /></Icon>
          </WinBtn>
          <WinBtn>
            <Icon w={11} h={11}><path d="M.5 2.5h7v8h-7zM2.5 2.5V.5h7v8h-2" fill="none" stroke="#333" /></Icon>
          </WinBtn>
          <WinBtn>
            <Icon w={11} h={11}><path d="M.5.5l10 10M10.5.5l-10 10" stroke="#333" /></Icon>
          </WinBtn>
          <RedNick />
        </WinControls>
      </TitleBar>

      <TabStrip>
        <FileTab>File</FileTab>
        <Tab $w={60}>Home</Tab>
        <Tab $w={48}>Insert</Tab>
        <Tab $w={90}>Page Layout</Tab>
        <Tab $w={64}>Formulas</Tab>
        <Tab $w={47} $active>Data</Tab>
        <Tab $w={60}>Review</Tab>
        <Tab $w={50}>View</Tab>
        <Tab $w={76}>Developer</Tab>
        <HelpRow>
          <Icon w={9} h={9}><path d="M1 5l3.5-3.5L8 5M1 8l3.5-3.5L8 8" fill="none" stroke="#555" strokeWidth="1.1" /></Icon>
          <HelpDot>?</HelpDot>
          <Icon w={12} h={12}><rect x="1" y="4.5" width="10" height="4" rx="1" fill="#f5f7fa" stroke="#666" /></Icon>
          <Icon w={12} h={12}><path d="M1.5 4.5h6v6h-6zM4 4.5V1.5h6.5v6H7.5" fill="#eef1f5" stroke="#666" /></Icon>
          <Icon w={16} h={12}><path d="M1 2l6 8M7 2l-6 8M8 2l7 8M15 2l-7 8" stroke="#777" strokeWidth="1.3" /></Icon>
        </HelpRow>
      </TabStrip>

      <Ribbon>
        <Group $w={259}>
          <GroupBody $pad={4}>
            <LargeBtn w={39} icon={<FromAccessIcon />}>From<br />Access</LargeBtn>
            <LargeBtn w={39} icon={<FromWebIcon />}>From<br />Web</LargeBtn>
            <LargeBtn w={39} icon={<FromTextIcon />}>From<br />Text</LargeBtn>
            <LargeBtn w={63} icon={<FromOtherIcon />}>From Other<br />Sources<Caret /></LargeBtn>
            <Divider $ml={2} $mr={1} />
            <LargeBtn w={70} icon={<ExistingIcon />}>Existing<br />Connections</LargeBtn>
          </GroupBody>
          <GroupLabel>Get External Data</GroupLabel>
        </Group>
        <Group $w={135}>
          <GroupBody $pad={4}>
            <LargeBtn w={44} icon={<RefreshIcon />}>Refresh<br />All<Caret /></LargeBtn>
            <SmallCol>
              <Small><ConnIcon />Connections</Small>
              <Small $off><PropsIcon />Properties</Small>
              <Small $off><LinksIcon />Edit Links</Small>
            </SmallCol>
          </GroupBody>
          <GroupLabel>Connections</GroupLabel>
        </Group>
        <Group $w={187}>
          <GroupBody $pad={6}>
            <SortCol>
              <SortAscIcon />
              <SortAscIcon flip />
            </SortCol>
            <LargeBtn w={30} icon={<SortIcon />}>Sort</LargeBtn>
            <Divider $ml={8} $mr={6} />
            <LargeBtn w={34} icon={<FilterIcon />}>Filter</LargeBtn>
            <SmallCol>
              <Small $off><ClearIcon />Clear</Small>
              <Small $off><ReapplyIcon />Reapply</Small>
              <Small $hot><AdvancedIcon />Advanced</Small>
            </SmallCol>
          </GroupBody>
          <GroupLabel>Sort &amp; Filter</GroupLabel>
        </Group>
        <Group $w={286}>
          <GroupBody $pad={4}>
            <LargeBtn w={50} icon={<TextColumnsIcon />}>Text to<br />Columns</LargeBtn>
            <LargeBtn w={52} icon={<RemoveDupIcon />}>Remove<br />Duplicates</LargeBtn>
            <LargeBtn w={62} icon={<ValidationIcon />}>Data<br />Validation<Caret /></LargeBtn>
            <LargeBtn w={66} icon={<ConsolidateIcon />}>Consolidate</LargeBtn>
            <LargeBtn w={47} icon={<WhatIfIcon />}>What-If<br />Analysis<Caret /></LargeBtn>
          </GroupBody>
          <GroupLabel>Data Tools</GroupLabel>
        </Group>
        <Group $w={225}>
          <GroupBody $pad={3}>
            <LargeBtn w={44} icon={<GroupIcon />}>Group<br /><Caret /></LargeBtn>
            <LargeBtn w={44} icon={<UngroupIcon />}>Ungroup<br /><Caret /></LargeBtn>
            <LargeBtn w={50} icon={<SubtotalIcon />}>Subtotal</LargeBtn>
            <SmallCol>
              <Small><DetailIcon show />Show Detail</Small>
              <Small><DetailIcon />Hide Detail</Small>
            </SmallCol>
          </GroupBody>
          <GroupLabel>Outline</GroupLabel>
          <Launcher />
        </Group>
      </Ribbon>

      <HeaderStrip />
      <ColBar>
        <Levels>
          <Level>1</Level>
          <Level>2</Level>
          <Level>3</Level>
        </Levels>
        <ColRow>
          <ColHead />
          {COL_LETTERS.map((c) => (
            <ColHead key={c} $on={"EFGHI".includes(c)}>{c}</ColHead>
          ))}
        </ColRow>
        <SplitCap />
      </ColBar>

      <Work>
        <OutlinePane>
          <OutlineDrawing />
        </OutlinePane>
        <Grid>
          <SheetRows />
        </Grid>
        <VScroll>
          <ScrollBtn />
          <Thumb />
          <Track />
          <ScrollBtn $down />
        </VScroll>
        <EdgeStrip>
          <EdgeMark $top={162} />
          <EdgeMark $top={270} />
        </EdgeStrip>
      </Work>

      <SheetBar>
        <NavArrows>
          <Nav />
          <Nav />
          <NavFwd />
          <NavFwd />
        </NavArrows>
        <ActiveTab>Sheet1</ActiveTab>
        <IdleTab $w={57}>Sheet2</IdleTab>
        <IdleTab $w={57}>Sheet3</IdleTab>
        <IdleTab $w={36}>
          <Icon w={14} h={13}>
            <path d="M3 3h9v9H3z" fill="#eef2f7" stroke="#7b8aa0" />
            <circle cx="3.5" cy="3.5" r="3" fill="#f4d35c" />
          </Icon>
        </IdleTab>
      </SheetBar>
      <StatusBar>
        <Ready>Ready</Ready>
        <StatusSep />
        <MacroWrap>
          <Icon w={14} h={14}>
            <rect x=".5" y="2.5" width="13" height="11" fill="#fff" stroke="#7f8ea1" />
            <path d="M1 5h12" stroke="#5078b8" strokeWidth="2" />
            <path d="M3 8h8M3 11h8" stroke="#7f9cc6" strokeDasharray="2 1" />
            <circle cx="3" cy="2.5" r="2.5" fill="#d8473b" />
          </Icon>
        </MacroWrap>
        <StatusSep />
      </StatusBar>
      <PlusBtn>+</PlusBtn>

      <Taskbar>
        <StartBtn>
          <Icon w={16} h={16}>
            <path d="M0 2.3L6.6 1.4V7.6H0zM7.4 1.3L16 0V7.6H7.4zM0 8.4H6.6V14.6L0 13.7zM7.4 8.4H16V16L7.4 14.7z" fill="#fff" />
          </Icon>
        </StartBtn>
        <SearchBox>Search the web and Windows</SearchBox>
        <TaskBtn $w={46}>
          <Icon w={20} h={14}>
            <rect x="5" y="1" width="10" height="12" fill="none" stroke="#fff" strokeWidth="1.4" />
            <path d="M2.5 3H1v8h1.5M17.5 3H19v8h-1.5" fill="none" stroke="#ddd" />
          </Icon>
        </TaskBtn>
        <TaskBtn $w={46} $on $mark>
          <Icon w={22} h={21}>
            <path d="M1 2h19v19H3a2 2 0 0 1-2-2z" fill="#4ca65c" />
            <path d="M11 2h9v9z" fill="#a8d7a6" />
            <text x="9" y="16" fontFamily="Liberation Sans" fontWeight="700" fontSize="15" textAnchor="middle" fill="#fff">X</text>
            <path d="M13 12h9l-1 9h-8z" fill="#e3efe0" />
          </Icon>
        </TaskBtn>
        <TaskGap />
        <TaskBtn $w={37} $mark>
          <Icon w={15} h={19}>
            <path d="M0 0h10l5 5v14H0z" fill="#f5f5f3" />
            <path d="M10 0l5 5h-5z" fill="#cfcfcf" />
          </Icon>
        </TaskBtn>
        <Tray>
          <Icon w={12} h={8}><path d="M1 7l5-5 5 5" fill="none" stroke="#eee" strokeWidth="1.2" /></Icon>
          <Icon w={15} h={12}>
            <rect x="4" y="3" width="10" height="7" fill="#ddd" />
            <path d="M1 1v3h3M2 4v3" stroke="#ddd" />
          </Icon>
          <Icon w={14} h={14}>
            <path d="M1 5h3l3-3v10L4 9H1z" fill="none" stroke="#eee" />
            <path d="M9 5a3 3 0 0 1 0 4M11 3a6 6 0 0 1 0 8" fill="none" stroke="#ddd" />
          </Icon>
          <Icon w={15} h={15}>
            <path d="M7 13a1 1 0 0 1 8 0M9 9a6 6 0 0 1 6-4" fill="none" stroke="#777" />
            <circle cx="5" cy="10" r="4.5" fill="#d8303c" />
            <path d="M3.2 8.2l3.6 3.6M6.8 8.2l-3.6 3.6" stroke="#fff" />
          </Icon>
          <Icon w={15} h={17}>
            <path d="M.5.5h14v11H8l-3 4v-4H.5z" fill="none" stroke="#eee" />
            <path d="M3 4h9M3 6.5h9M3 9h6" stroke="#eee" />
          </Icon>
          <Clock>11:00 PM<br />12/14/2019</Clock>
        </Tray>
      </Taskbar>

      <Recorder>
        <RecTop>
          <Icon w={15} h={15}>
            <rect x="0" y="0" width="15" height="15" fill="#ee8633" />
            <rect x="2.5" y="2.5" width="10" height="10" rx="4" fill="#fbe7d4" />
            <circle cx="7.5" cy="7.5" r="3" fill="#ee8633" />
          </Icon>
          <RecTitle>{"Recording:  00:03:06"}</RecTitle>
          <RecMin />
          <RecClose>×</RecClose>
        </RecTop>
        <RecBottom>
          <Icon w={20} h={20}>
            <circle cx="10" cy="10" r="9" fill="none" stroke="#555" strokeWidth="1.4" />
            <path d="M7.5 5.5v9M12.5 5.5v9" stroke="#555" strokeWidth="2" />
          </Icon>
          <RecLabel $ml={4}>Pause</RecLabel>
          <StopSquare />
          <RecLabel $ml={7}>Stop <Muted>(F8)</Muted></RecLabel>
          <RecIcon $ml={189}>
            <Icon w={22} h={24}>
              <path d="M1 23l2-7L16 2.5a2 2 0 0 1 3 0l2 2a2 2 0 0 1 0 3L8 21z" fill="#4f4f4f" />
            </Icon>
          </RecIcon>
          <RecLabel $ml={3}>Draw</RecLabel>
          <RecSep $ml={11} />
          <RecIcon $ml={12}>
            <Icon w={22} h={24}>
              <circle cx="13" cy="9" r="7.5" fill="#fff" stroke="#555" strokeWidth="1.5" />
              <path d="M13 5.5v7M9.5 9h7" stroke="#555" strokeWidth="1.4" />
              <path d="M8 15l-6 7" stroke="#555" strokeWidth="2.4" />
            </Icon>
          </RecIcon>
          <RecIcon $ml={10}>
            <Icon w={22} h={24}>
              <circle cx="13" cy="9" r="7.5" fill="#fff" stroke="#555" strokeWidth="1.5" />
              <path d="M9.5 9h7" stroke="#555" strokeWidth="1.4" />
              <path d="M8 15l-6 7" stroke="#555" strokeWidth="2.4" />
            </Icon>
          </RecIcon>
          <RecLabel $ml={8}>x1</RecLabel>
          <RecSep $ml={17} />
          <RecIcon $ml={10}>
            <Icon w={20} h={24}>
              <circle cx="10" cy="9" r="8.5" fill="#5a5a5a" />
              <circle cx="10" cy="9" r="3" fill="#f5f1e6" />
              <path d="M3 20h14v3H3z" fill="#5a5a5a" />
            </Icon>
          </RecIcon>
          <RecIcon $ml={15}>
            <Icon w={20} h={18}>
              <path d="M0 5h5l6-4v16l-6-4H0z" fill="#6a6a6a" />
              <path d="M14 6a4 4 0 0 1 0 6" fill="none" stroke="#888" />
            </Icon>
          </RecIcon>
          <RecIcon $ml={13}>
            <Icon w={14} h={26}>
              <rect x="2.5" y="0" width="9" height="16" rx="4.5" fill="#8e8e8e" />
              <path d="M1 11a6 6 0 0 0 12 0M7 18v5M3 24h8" fill="none" stroke="#9a9a9a" />
            </Icon>
          </RecIcon>
        </RecBottom>
      </Recorder>
    </Root>
  );
}
